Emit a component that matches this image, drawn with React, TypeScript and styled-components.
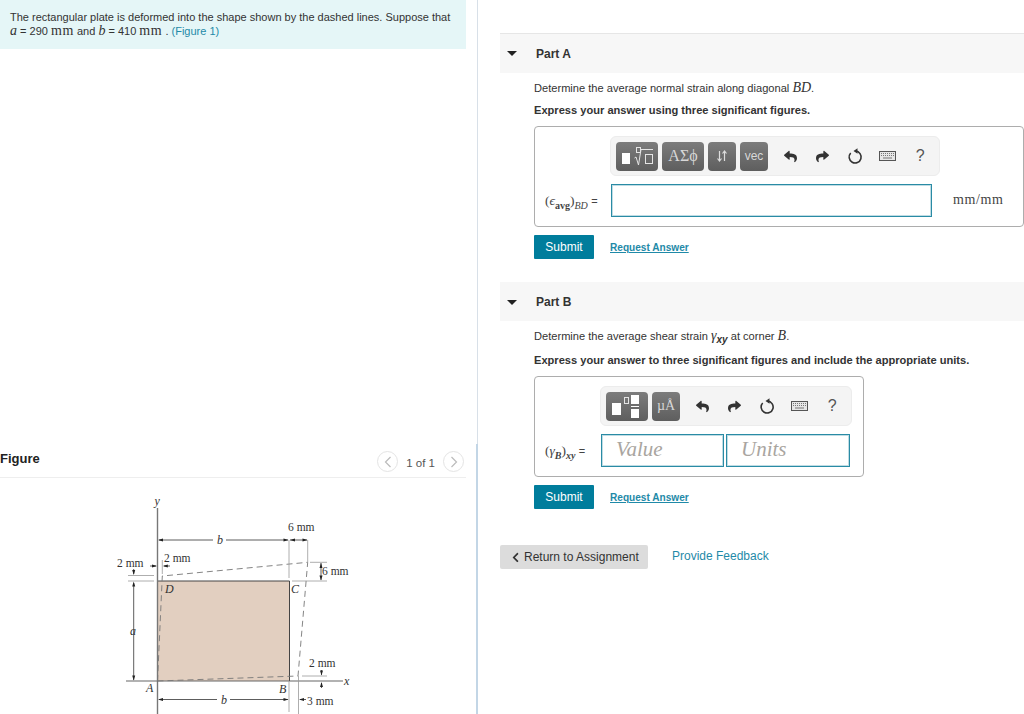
import React from "react";
import styled, { createGlobalStyle } from "styled-components";
import { FaReply, FaShare, FaChevronLeft } from "react-icons/fa";

const GlobalStyle = createGlobalStyle`
  html, body {
    margin: 0;
    padding: 0;
    background: #fff;
    height: 100%;
    overflow: hidden;
  }
  body {
    font-family: "Liberation Sans", Arial, sans-serif;
    font-size: 12px;
    color: #333;
  }
`;

const SERIF = `"Liberation Serif", "Times New Roman", serif`;
const TEAL = "#007d9c";
const LINK = "#1f8aa8";

const Page = styled.div`
  display: flex;
  width: 1024px;
  height: 714px;
  overflow: hidden;
`;

const LeftColumn = styled.div`
  width: 478px;
  flex: none;
  display: flex;
  flex-direction: column;
`;

const LeftTop = styled.div`
  height: 444px;
  box-sizing: border-box;
  border-right: 1px solid #d8e0e8;
`;

const LeftBottom = styled.div`
  flex: 1;
  box-sizing: border-box;
  border-right: 2px solid #c3d6e6;
`;

const ProblemBox = styled.div`
  width: 466px;
  height: 49px;
  box-sizing: border-box;
  padding: 10px 0 0 10px;
  background: #e5f6f7;
  font-size: 11px;
  line-height: 14px;
`;

const MathVar = styled.i`
  font-family: ${SERIF};
  font-size: 14px;
`;

const MathUnit = styled.span`
  font-family: ${SERIF};
  font-size: 14px;
  letter-spacing: 0.6px;
`;

const FigureLink = styled.span`
  color: ${LINK};
`;

const FigureHeader = styled.div`
  width: 466px;
  height: 34px;
  box-sizing: border-box;
  border-bottom: 1px solid #eee;
  display: flex;
  align-items: center;
  justify-content: space-between;
  padding-right: 2px;
`;

const FigureTitle = styled.div`
  font-weight: bold;
  font-size: 13px;
  color: #222;
  margin-bottom: 4px;
`;

const Pager = styled.div`
  display: flex;
  align-items: center;
  gap: 8px;
  padding-top: 2px;
  font-size: 11.5px;
  color: #555;
`;

const PagerCount = styled.span`
  margin-top: 2px;
`;

const PagerButton = styled.div`
  width: 21px;
  height: 21px;
  box-sizing: border-box;
  border: 1px solid #e4e4e4;
  border-radius: 50%;
  display: flex;
  align-items: center;
  justify-content: center;
`;

const FigureSvg = styled.svg`
  display: block;
  margin: 12px 0 0 100px;
  width: 270px;
  height: 224px;
`;

const RightColumn = styled.div`
  flex: 1;
  padding: 33px 0 0 22px;
  min-width: 0;
`;

const PartHeader = styled.div<{ $first?: boolean }>`
  height: ${(p) => (p.$first ? "40px" : "39px")};
  box-sizing: border-box;
  display: flex;
  align-items: center;
  background: #f7f7f7;
  margin-top: ${(p) => (p.$first ? "0" : "23px")};
  border-top: 1px solid ${(p) => (p.$first ? "#e6e6e6" : "#f7f7f7")};
`;

const Caret = styled.div`
  width: 0;
  height: 0;
  margin-left: 7px;
  border-left: 5px solid transparent;
  border-right: 5px solid transparent;
  border-top: 5px solid #222;
`;

const PartTitle = styled.div`
  margin-left: 19px;
  font-weight: bold;
  font-size: 12px;
  color: #333;
`;

const PartBody = styled.div`
  padding-left: 34px;
`;

const Prompt = styled.div`
  margin-top: 7px;
  font-size: 11.1px;
  line-height: 16px;
`;

const Instruction = styled.div<{ $gap: number }>`
  margin-top: ${(p) => p.$gap}px;
  font-size: 11.1px;
  line-height: 16px;
  font-weight: bold;
`;

const AnswerBox = styled.div<{ $width: number; $height: number }>`
  margin-top: 8px;
  width: ${(p) => p.$width}px;
  height: ${(p) => p.$height}px;
  box-sizing: border-box;
  border: 1px solid #adadad;
  border-radius: 4px;
  padding-top: 9px;
`;

const Toolbar = styled.div<{ $left: number }>`
  display: inline-flex;
  align-items: center;
  gap: 4px;
  height: 40px;
  box-sizing: border-box;
  margin-left: ${(p) => p.$left}px;
  padding: 0 2px 0 5px;
  background: #f4f4f4;
  border: 1px solid #ececec;
  border-radius: 6px;
  vertical-align: top;
`;

const TemplateButton = styled.div<{ $width: number; $size?: number }>`
  width: ${(p) => p.$width}px;
  height: 29px;
  flex: none;
  display: flex;
  align-items: center;
  justify-content: center;
  border-radius: 4px;
  background: linear-gradient(#7c7c7c, #5e5e5e);
  color: #d8d8d8;
  font-family: ${SERIF};
  font-size: ${(p) => p.$size ?? 16}px;
`;

const VecLabel = styled.span`
  font-family: "Liberation Sans", Arial, sans-serif;
  font-size: 12px;
`;

const ToolSlot = styled.div`
  width: 32.5px;
  flex: none;
  display: flex;
  align-items: center;
  justify-content: center;
  color: #333;
  font-size: 15px;
`;

const HelpMark = styled.span`
  color: #555;
  font-size: 16px;
`;

const Tools = styled.div`
  display: flex;
  margin-left: 2px;
`;

const AnswerRow = styled.div`
  display: flex;
  align-items: center;
  margin-top: 8px;
  height: 33px;
`;

const AnswerLabel = styled.div<{ $width: number }>`
  width: ${(p) => p.$width}px;
  box-sizing: border-box;
  flex: none;
  padding-left: 10px;
  font-family: ${SERIF};
  font-size: 13.5px;
  color: #444;
  white-space: nowrap;
`;

const Sub = styled.sub<{ $upright?: boolean; $bold?: boolean }>`
  font-size: 10px;
  line-height: 0;
  font-style: ${(p) => (p.$upright ? "normal" : "italic")};
  font-weight: ${(p) => (p.$bold ? "bold" : "normal")};
`;

const SansEq = styled.span`
  font-family: "Liberation Sans", Arial, sans-serif;
  font-size: 11px;
`;

const Field = styled.div<{ $width: number }>`
  width: ${(p) => p.$width}px;
  height: 33px;
  box-sizing: border-box;
  flex: none;
  margin-right: 2px;
  border: 1px solid #2a8ba5;
  box-shadow: inset 0 0 0 1px rgba(42, 139, 165, 0.3);
  padding-left: 14px;
  background: #fff;
  font-family: ${SERIF};
  font-style: italic;
  font-size: 21px;
  line-height: 29px;
  color: #a9a5a0;
`;

const UnitLabel = styled.div`
  margin: 0 0 2px 19px;
  font-family: ${SERIF};
  font-size: 14px;
  letter-spacing: 0.6px;
  color: #444;
`;

const ActionRow = styled.div`
  display: flex;
  align-items: center;
  margin-top: 8px;
`;

const SubmitButton = styled.div`
  width: 60px;
  height: 24px;
  display: flex;
  align-items: center;
  justify-content: center;
  border-radius: 1px;
  background: ${TEAL};
  color: #fff;
  font-size: 12px;
`;

const RequestLink = styled.span`
  margin-left: 16px;
  font-size: 10.1px;
  font-weight: bold;
  color: ${LINK};
  text-decoration: underline;
`;

const FooterRow = styled.div`
  display: flex;
  align-items: center;
  margin-top: 36px;
`;

const ReturnButton = styled.div`
  width: 148px;
  height: 24px;
  display: flex;
  align-items: center;
  gap: 3px;
  box-sizing: border-box;
  padding-left: 10px;
  border-radius: 2px;
  background: #dcdcdc;
  font-size: 12px;
  color: #333;
`;

const FeedbackLink = styled.span`
  margin-left: 24px;
  margin-top: -2px;
  font-size: 12px;
  color: ${LINK};
`;

const RootTemplateIcon = () => (
  <svg width="42" height="29" viewBox="0 0 42 29">
    <rect x="6" y="11" width="8" height="11" fill="#fff" />
    <rect x="20.5" y="5.5" width="4" height="5" fill="none" stroke="#e4e4e4" />
    <polyline points="18.5,16 20,15 22.5,23 25,7.5 37,7.5" fill="none" stroke="#e4e4e4" />
    <rect x="29.5" y="12.5" width="7" height="9" fill="none" stroke="#e4e4e4" />
  </svg>
);

const FractionTemplateIcon = () => (
  <svg width="42" height="29" viewBox="0 0 42 29">
    <rect x="6" y="11" width="9" height="12" fill="#fff" />
    <rect x="18.5" y="5.5" width="4" height="6" fill="none" stroke="#e4e4e4" />
    <rect x="25" y="3" width="8" height="9" fill="#fff" />
    <rect x="25" y="14" width="8" height="1" fill="#fff" />
    <rect x="25" y="17" width="8" height="9" fill="#fff" />
  </svg>
);

const ArrowsIcon = () => (
  <svg width="14" height="14" viewBox="0 0 14 14" fill="none" stroke="#ddd" strokeWidth="1.2">
    <path d="M4.5 2v10M2.5 9.5l2 2.5 2-2.5" />
    <path d="M9.5 12V2M7.5 4.5l2-2.5 2 2.5" />
  </svg>
);

const ResetIcon = () => (
  <svg width="16" height="17" viewBox="0 0 16 17" fill="none">
    <path d="M8.5 3.05A6 6 0 1 1 3.7 5" stroke="#333" strokeWidth="1.6" />
    <path d="M6.5 3L10.5 0.3V5.7z" fill="#333" />
  </svg>
);

const KeyboardIcon = () => (
  <svg width="17" height="10" viewBox="0 0 17 10">
    <rect x="0.5" y="0.5" width="16" height="9" fill="#e6e6e6" stroke="#555" />
    <path d="M2 2.5h13M2 4.5h13" stroke="#777" strokeDasharray="1 1" />
    <path d="M4 7h9" stroke="#777" />
  </svg>
);

const ToolIcons = () => (
  <Tools>
    <ToolSlot><FaReply size={13} /></ToolSlot>
    <ToolSlot><FaShare size={13} /></ToolSlot>
    <ToolSlot><ResetIcon /></ToolSlot>
    <ToolSlot><KeyboardIcon /></ToolSlot>
    <ToolSlot><HelpMark>?</HelpMark></ToolSlot>
  </Tools>
);

const PagerChevron = ({ dir }: { dir: "left" | "right" }) => (
  <svg width="8" height="12" viewBox="0 0 8 12" fill="none" stroke="#bbb" strokeWidth="1.2">
    <path d={dir === "left" ? "M6.5 1L1.5 6l5 5" : "M1.5 1l5 5-5 5"} />
  </svg>
);

const DimText = styled.text`
  font-family: ${SERIF};
  font-size: 11.5px;
  fill: #333;
`;

const DimVar = styled.text`
  font-family: ${SERIF};
  font-style: italic;
  font-size: 12px;
  fill: #333;
`;

const Arrow = ({ x, y, dir }: { x: number; y: number; dir: "l" | "r" | "u" | "d" }) => {
  const pts = {
    l: `${x},${y} ${x + 5},${y - 1.5} ${x + 5},${y + 1.5}`,
    r: `${x},${y} ${x - 5},${y - 1.5} ${x - 5},${y + 1.5}`,
    u: `${x},${y} ${x - 1.5},${y + 5} ${x + 1.5},${y + 5}`,
    d: `${x},${y} ${x - 1.5},${y - 5} ${x + 1.5},${y - 5}`,
  }[dir];
  return <polygon points={pts} fill="#222" />;
};

const PlateFigure = () => (
  <FigureSvg viewBox="0 0 270 224">
    <rect x="57.5" y="91" width="132" height="100" fill="#e2cfc0" />
    <path d="M57.5 191V91H189.5V191" fill="none" stroke="#444" strokeWidth="1" />
    <path d="M57.5 18V224" stroke="#777" strokeWidth="1.4" />
    <path d="M26 191H243" stroke="#666" strokeWidth="1.2" />

    <path d="M57.5 191L198 186L207.7 72.3L62.3 86Z" fill="none" stroke="#777" strokeWidth="0.9" strokeDasharray="6 4" />

    <g stroke="#999" strokeWidth="0.8" fill="none">
      <path d="M189 50V88" />
      <path d="M207.7 50V72" />
      <path d="M189 191V222" />
      <path d="M198.5 186V224" />
      <path d="M210 72.3H227" />
      <path d="M192 91H227" />
      <path d="M28 85.5H54" />
      <path d="M28 91H54" />
      <path d="M202 186H227" />
      <path d="M62.3 70V84" />
    </g>

    <g stroke="#333" strokeWidth="0.8" fill="none">
      <path d="M59 50H113M126 50H188" />
      <path d="M59 209.5H117M130 209.5H188" />
      <path d="M190 50H207" />
      <path d="M33.7 93V190" />
      <path d="M221 73V90" />
      <path d="M221.5 180V185" />
      <path d="M221.5 193V198" />
      <path d="M33.7 79V84" />
      <path d="M200 209.5H206" />
      <path d="M50 76H56" />
      <path d="M64 76H70" />
    </g>

    <Arrow x={58} y={50} dir="l" />
    <Arrow x={188.5} y={50} dir="r" />
    <Arrow x={190} y={50} dir="l" />
    <Arrow x={207.5} y={50} dir="r" />
    <Arrow x={58} y={209.5} dir="l" />
    <Arrow x={188.5} y={209.5} dir="r" />
    <Arrow x={199} y={209.5} dir="l" />
    <Arrow x={33.7} y={91.5} dir="u" />
    <Arrow x={33.7} y={190.5} dir="d" />
    <Arrow x={221} y={73} dir="u" />
    <Arrow x={221} y={90.5} dir="d" />
    <Arrow x={221.5} y={185.5} dir="d" />
    <Arrow x={221.5} y={192} dir="u" />
    <Arrow x={33.7} y={85} dir="d" />
    <Arrow x={57} y={76} dir="r" />
    <Arrow x={62.8} y={76} dir="l" />

    <DimVar x="54.5" y="15">y</DimVar>
    <DimVar x="117" y="54">b</DimVar>
    <DimVar x="121" y="214">b</DimVar>
    <DimVar x="30" y="145">a</DimVar>
    <DimVar x="65" y="103">D</DimVar>
    <DimVar x="191" y="103">C</DimVar>
    <DimVar x="46" y="202">A</DimVar>
    <DimVar x="179" y="203">B</DimVar>
    <DimVar x="244" y="195">x</DimVar>

    <DimText x="188" y="41">6 mm</DimText>
    <DimText x="17" y="77">2 mm</DimText>
    <DimText x="64" y="72">2 mm</DimText>
    <DimText x="222" y="85">6 mm</DimText>
    <DimText x="209" y="177">2 mm</DimText>
    <DimText x="207" y="215">3 mm</DimText>
  </FigureSvg>
);

export default function App() {
  return (
    <>
      <GlobalStyle />
      <Page>
        <LeftColumn>
          <LeftTop>
            <ProblemBox>
              The rectangular plate is deformed into the shape shown by the dashed lines. Suppose that
              <br />
              <MathVar>a</MathVar> = 290 <MathUnit>mm</MathUnit> and <MathVar>b</MathVar> = 410 <MathUnit>mm</MathUnit> . <FigureLink>(Figure 1)</FigureLink>
            </ProblemBox>
          </LeftTop>
          <LeftBottom>
            <FigureHeader>
              <FigureTitle>Figure</FigureTitle>
              <Pager>
                <PagerButton><PagerChevron dir="left" /></PagerButton>
                <PagerCount>1 of 1</PagerCount>
                <PagerButton><PagerChevron dir="right" /></PagerButton>
              </Pager>
            </FigureHeader>
            <PlateFigure />
          </LeftBottom>
        </LeftColumn>

        <RightColumn>
          <PartHeader $first>
            <Caret />
            <PartTitle>Part A</PartTitle>
          </PartHeader>
          <PartBody>
            <Prompt>
              Determine the average normal strain along diagonal <MathVar>BD</MathVar>.
            </Prompt>
            <Instruction $gap={6}>Express your answer using three significant figures.</Instruction>
            <AnswerBox $width={490} $height={101}>
              <Toolbar $left={75}>
                <TemplateButton $width={42}><RootTemplateIcon /></TemplateButton>
                <TemplateButton $width={42}>ΑΣϕ</TemplateButton>
                <TemplateButton $width={28}><ArrowsIcon /></TemplateButton>
                <TemplateButton $width={28}><VecLabel>vec</VecLabel></TemplateButton>
                <ToolIcons />
              </Toolbar>
              <AnswerRow>
                <AnswerLabel $width={76}>
                  (<i>ϵ</i><Sub $upright $bold>avg</Sub>)<Sub>BD</Sub> <SansEq>=</SansEq>
                </AnswerLabel>
                <Field $width={321} />
                <UnitLabel>mm/mm</UnitLabel>
              </AnswerRow>
            </AnswerBox>
            <ActionRow>
              <SubmitButton>Submit</SubmitButton>
              <RequestLink>Request Answer</RequestLink>
            </ActionRow>
          </PartBody>

          <PartHeader>
            <Caret />
            <PartTitle>Part B</PartTitle>
          </PartHeader>
          <PartBody>
            <Prompt>
              Determine the average shear strain <MathVar>γ</MathVar><Sub $bold>xy</Sub> at corner <MathVar>B</MathVar>.
            </Prompt>
            <Instruction $gap={8}>Express your answer to three significant figures and include the appropriate units.</Instruction>
            <AnswerBox $width={330} $height={101}>
              <Toolbar $left={65}>
                <TemplateButton $width={42}><FractionTemplateIcon /></TemplateButton>
                <TemplateButton $width={28} $size={14}>µÅ</TemplateButton>
                <ToolIcons />
              </Toolbar>
              <AnswerRow>
                <AnswerLabel $width={66}>
                  (<i>γ</i><Sub $bold>B</Sub>)<Sub $bold>xy</Sub> <SansEq>=</SansEq>
                </AnswerLabel>
                <Field $width={123}>Value</Field>
                <Field $width={124}>Units</Field>
              </AnswerRow>
            </AnswerBox>
            <ActionRow>
              <SubmitButton>Submit</SubmitButton>
              <RequestLink>Request Answer</RequestLink>
            </ActionRow>
          </PartBody>

          <FooterRow>
            <ReturnButton><FaChevronLeft size={11} />Return to Assignment</ReturnButton>
            <FeedbackLink>Provide Feedback</FeedbackLink>
          </FooterRow>
        </RightColumn>
      </Page>
    </>
  );
}
